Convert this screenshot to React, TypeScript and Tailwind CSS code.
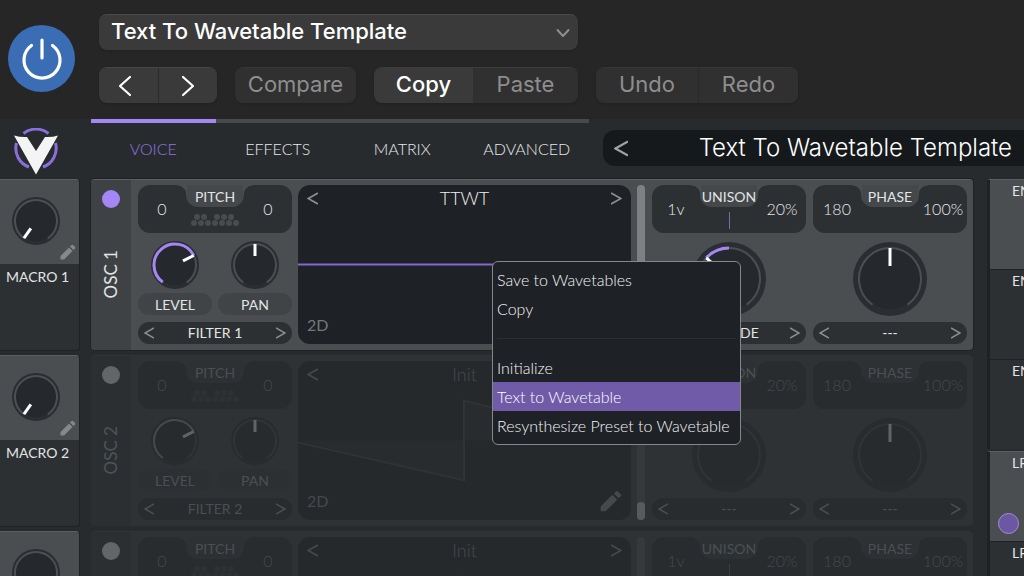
import clsx from "clsx";

const TABS = ["VOICE", "EFFECTS", "MATRIX", "ADVANCED"];

type Osc = {
  id: number;
  on: boolean;
  wave: string;
  filter: string;
  spectral: string;
};

const OSCILLATORS: Osc[] = [
  { id: 1, on: true, wave: "TTWT", filter: "FILTER 1", spectral: "VOCODE" },
  { id: 2, on: false, wave: "Init", filter: "FILTER 2", spectral: "---" },
  { id: 3, on: false, wave: "Init", filter: "FILTER 1", spectral: "---" },
];

const MODULATORS = [
  { name: "ENV 1", active: true },
  { name: "ENV 2", active: false },
  { name: "ENV 3", active: false },
  { name: "LFO 1", active: true },
  { name: "LFO 2", active: false },
];

// Degrees clockwise from twelve o'clock
function polar(c: number, r: number, deg: number) {
  const a = ((deg - 90) * Math.PI) / 180;
  return `${c + r * Math.cos(a)} ${c + r * Math.sin(a)}`;
}

function arc(c: number, r: number, from: number, to: number) {
  const large = to - from > 180 ? 1 : 0;
  return `M${polar(c, r, from)} A${r} ${r} 0 ${large} 1 ${polar(c, r, to)}`;
}

type KnobProps = {
  label: string;
  angle: number;
  fillFrom?: number;
  fillTo?: number;
  big?: boolean;
  on?: boolean;
};

function Knob({ label, angle, fillFrom, fillTo, big, on = true }: KnobProps) {
  const c = big ? 37 : 24;
  const r = big ? 31 : 21;
  return (
    <div
      className={clsx("relative shrink-0", big ? "mt-[2px] size-[74px]" : "size-12")}
    >
      <svg viewBox={`0 0 ${c * 2} ${c * 2}`} className="size-full" fill="none">
        <circle cx={c} cy={c} r={c} fill={on ? "#2a2d31" : "#282c2f"} />
        <circle cx={c} cy={c} r={r - 1} fill={on ? "#25282d" : "#272b2e"} />
        <path
          d={arc(c, r, -144, 144)}
          stroke={on ? "#4b4f53" : "#2f3437"}
          strokeWidth="2"
          strokeLinecap="round"
        />
        {fillFrom !== undefined && fillTo !== undefined && (
          <path
            d={arc(c, r, fillFrom, fillTo)}
            stroke={on ? "#a586f5" : "#46494c"}
            strokeWidth={on ? 3 : 2}
          />
        )}
        <path
          d={`M${polar(c, big ? 13 : 9, angle)} L${polar(c, r, angle)}`}
          stroke={on ? "#fff" : "#606467"}
          strokeWidth="3"
        />
      </svg>
      <input
        type="range"
        aria-label={label}
        className="absolute inset-0 size-full cursor-pointer opacity-0"
      />
    </div>
  );
}

function Pencil({ className }: { className?: string }) {
  return (
    <svg viewBox="0 0 16 16" className={className} fill="currentColor">
      <path d="M1 15.500q-.5 0-.5-.5v-3L9 3.500l3.500 3.500L4 15.500zM10 2.500L11.500 1q.8-.7 1.500 0l2 2q.7.8 0 1.500L13.500 6z" />
    </svg>
  );
}

function Angle({ right, className }: { right?: boolean; className?: string }) {
  return (
    <svg
      viewBox="0 0 10 12"
      className={clsx("shrink-0", className ?? "h-3 w-[10px]")}
      fill="none"
      stroke="currentColor"
    >
      <path d={right ? "M0 1l9 5-9 5" : "M10 1L1 6l9 5"} strokeWidth="1.5" />
    </svg>
  );
}

function HostArrow({ right }: { right?: boolean }) {
  return (
    <svg
      viewBox="0 0 14 22"
      className="h-[22px] w-[14px]"
      fill="none"
      stroke="#fff"
      strokeWidth="2.200"
      strokeLinecap="round"
      strokeLinejoin="round"
    >
      <path d={right ? "M2 2l10 9-10 9" : "M12 2L2 11l10 9"} />
    </svg>
  );
}

function Logo() {
  return (
    <svg viewBox="0 0 48 48" className="size-12" fill="none">
      <path
        d="M11.500 5.500A20 20 0 0 1 36.500 5.500M43.500 15A20 20 0 0 1 31 39M17 39A20 20 0 0 1 4.500 15"
        stroke="#8a6edb"
        strokeWidth="3"
      />
      <path
        d="M2 7.500q7 2 13 1.500L24 23l9-14q7 .5 13-1.500L24 46.500z"
        fill="#f4f4f4"
      />
    </svg>
  );
}

function HostHeader() {
  const raised = "bg-[#3a3a3a] text-white";
  const flat = "bg-[#303030] text-[#8e8e8e]";
  const group = "flex h-9 overflow-hidden rounded-lg border-t shadow-sm";
  return (
    <header className="flex gap-6 bg-[#262626] pt-[14px] pb-4 pl-2 font-[Inter,sans-serif] text-[22px] leading-8">
      <button
        aria-label="Power"
        className="mt-[11px] flex size-[67px] items-center justify-center rounded-full bg-[#3b6db4]"
      >
        <svg
          viewBox="0 0 42 42"
          className="size-[42px]"
          fill="none"
          stroke="#fff"
          strokeWidth="3.200"
          strokeLinecap="round"
        >
          <path d="M21 2v18M10.500 7.500a18 18 0 1 0 21 0" />
        </svg>
      </button>
      <div className="flex flex-col gap-[17px]">
        <div className="relative w-[479px]">
          <select
            aria-label="Preset"
            className="h-9 w-full appearance-none rounded-lg border-t border-[#4a4a4a] bg-[#3a3a3a] pb-1 pl-3 font-medium text-white shadow-sm"
          >
            <option>Text To Wavetable Template</option>
          </select>
          <svg
            viewBox="0 0 14 10"
            className="pointer-events-none absolute top-[14px] right-2 h-[10px] w-[14px]"
            fill="none"
            stroke="#8e8e8e"
            strokeWidth="2"
            strokeLinecap="round"
            strokeLinejoin="round"
          >
            <path d="M1.500 2L7 8l5.500-6" />
          </svg>
        </div>
        <div className="flex gap-[18px]">
          <div className={clsx(group, "border-[#454545]")}>
            <button
              aria-label="Previous"
              className={clsx(raised, "flex w-[59px] items-center justify-center pr-2")}
            >
              <HostArrow />
            </button>
            <button
              aria-label="Next"
              className={clsx(
                raised,
                "flex w-[59px] items-center justify-center border-l border-[#2c2c2c]"
              )}
            >
              <HostArrow right />
            </button>
          </div>
          <div className={clsx(group, "border-[#363636]")}>
            <button className={clsx(flat, "w-[121px] pb-1")}>Compare</button>
          </div>
          <div className={clsx(group, "border-[#3d3d3d]")}>
            <button className={clsx(raised, "w-[99px] pb-1 font-medium")}>
              Copy
            </button>
            <button className={clsx(flat, "w-[105px] pb-1")}>Paste</button>
          </div>
          <div className={clsx(group, "border-[#363636]")}>
            <button className={clsx(flat, "w-[102px] pb-1")}>Undo</button>
            <button
              className={clsx(flat, "w-[100px] border-l border-[#292929] pb-1")}
            >
              Redo
            </button>
          </div>
        </div>
      </div>
    </header>
  );
}

function TopBar() {
  return (
    <div className="flex h-[59px] shrink-0">
      <div className="flex w-[91px] pt-[9px] pl-3">
        <Logo />
      </div>
      <nav className="flex w-[498px]">
        {TABS.map((tab, i) => (
          <button
            key={tab}
            className={clsx(
              "flex-1 border-t-4 pb-1 text-base font-light",
              i === 0
                ? "border-[#a586f5] text-[#9274e0]"
                : "border-[#47494b] text-[#e6e8e9]"
            )}
          >
            {tab}
          </button>
        ))}
      </nav>
      <div className="mt-[11px] ml-[14px] flex h-9 flex-1 items-center rounded-l-xl bg-[#15191c] pl-[11px]">
        <button aria-label="Previous preset" className="text-[#a0a3a5]">
          <Angle className="h-[17px] w-[14px]" />
        </button>
        <span className="flex-1 pr-3 text-right font-[Inter,sans-serif] text-2xl font-light whitespace-nowrap text-white">
          Text To Wavetable Template
        </span>
      </div>
    </div>
  );
}

function Macro({ n }: { n: number }) {
  return (
    <section className="h-[172px] shrink-0 overflow-hidden rounded-r border border-t-0 border-l-0 border-[#1e2225] bg-[#2c3033]">
      <div className="relative h-[85px] border-t border-[#5b5f62] bg-[#4a4e51] pt-[17px] pl-3">
        <Knob label={`Macro ${n}`} angle={-145} />
        <Pencil className="absolute right-[3px] bottom-1 size-4 text-[#85888a]" />
      </div>
      <p className="pt-[3px] pl-[6px] text-sm text-[#e2e4e5]">MACRO {n}</p>
    </section>
  );
}

function ValueBox({
  title,
  left,
  right,
  on,
  children,
}: {
  title: string;
  left: string;
  right: string;
  on: boolean;
  children?: React.ReactNode;
}) {
  const value = clsx(
    "w-12 bg-transparent text-center text-base font-light",
    on ? "text-[#e6e8e9]" : "text-[#45494c]"
  );
  return (
    <div
      className={clsx(
        "flex h-12 rounded-xl",
        on ? "bg-[#2c3033]" : "bg-[#282c2f]"
      )}
    >
      <input aria-label={`${title} left`} defaultValue={left} className={value} />
      <div className="relative flex flex-1 flex-col items-center">
        <span
          className={clsx(
            "absolute top-0 -left-[9px] size-[10px]",
            on
              ? "bg-[radial-gradient(circle_at_0_100%,transparent_9px,#4a4e51_10px)]"
              : "bg-[radial-gradient(circle_at_0_100%,transparent_9px,#2e3235_10px)]"
          )}
        />
        <span
          className={clsx(
            "absolute top-0 -right-[9px] size-[10px]",
            on
              ? "bg-[radial-gradient(circle_at_100%_100%,transparent_9px,#4a4e51_10px)]"
              : "bg-[radial-gradient(circle_at_100%_100%,transparent_9px,#2e3235_10px)]"
          )}
        />
        <span
          className={clsx(
            "h-[22px] w-full rounded-b-xl text-center text-sm leading-6 whitespace-nowrap",
            on ? "bg-[#44484b] text-[#e2e4e5]" : "bg-[#2d3134] text-[#4b4f52]"
          )}
        >
          {title}
        </span>
        {children}
      </div>
      <input aria-label={`${title} right`} defaultValue={right} className={value} />
    </div>
  );
}

function Selector({ value, on }: { value: string; on: boolean }) {
  return (
    <div
      className={clsx(
        "flex h-[22px] items-center justify-between rounded-full px-[6px] text-sm",
        on ? "bg-[#2c3033] text-[#e2e4e5]" : "bg-[#282c2f] text-[#4b4f52]"
      )}
    >
      <button aria-label="Previous" className={on ? "text-[#8c9092]" : ""}>
        <Angle />
      </button>
      <span>{value}</span>
      <button aria-label="Next" className={on ? "text-[#8c9092]" : ""}>
        <Angle right />
      </button>
    </div>
  );
}

function KeyDots({ on }: { on: boolean }) {
  const top = [6, 13, 26, 33, 40];
  const bottom = [3, 10, 17, 24, 31, 38, 45];
  return (
    <svg
      viewBox="0 0 48 14"
      className="mt-[6px] h-[14px] w-12"
      fill={on ? "#484c4f" : "#2d3134"}
    >
      {top.map((x) => (
        <circle key={x} cx={x} cy="4" r="3" />
      ))}
      {bottom.map((x) => (
        <circle key={x} cx={x} cy="10" r="3" />
      ))}
    </svg>
  );
}

function Wavetable({ osc }: { osc: Osc }) {
  return (
    <div
      className={clsx(
        "relative flex flex-1 flex-col justify-between overflow-hidden rounded-xl px-[9px] pt-px pb-[7px]",
        osc.on ? "bg-[#1e2125] text-[#8c9092]" : "bg-[#25292c] text-[#45494c]"
      )}
    >
      <svg
        viewBox="0 0 333 160"
        preserveAspectRatio="none"
        className="absolute inset-0 size-full"
        fill="none"
      >
        {osc.on ? (
          <path d="M0 80H333" stroke="#8468cb" strokeWidth="2" />
        ) : (
          <>
            <path d="M0 80L166 120V40L333 80z" fill="#282c2f" />
            <path d="M0 82L166 120V40L333 80" stroke="#2f3336" strokeWidth="2" />
          </>
        )}
      </svg>
      <div className="relative flex h-6 items-center justify-between">
        <button aria-label="Previous wavetable">
          <Angle className="h-[13px] w-[11px]" />
        </button>
        <span
          className={clsx("text-lg font-light", osc.on && "text-[#f0f1f2]")}
        >
          {osc.wave}
        </span>
        <button aria-label="Next wavetable">
          <Angle right className="h-[13px] w-[11px]" />
        </button>
      </div>
      <div className="relative flex items-center justify-between">
        <span className={clsx("text-base", osc.on && "text-[#74787b]")}>2D</span>
        {!osc.on && (
          <button aria-label="Edit wavetable">
            <Pencil className="size-[22px]" />
          </button>
        )}
      </div>
    </div>
  );
}

function ContextMenu() {
  const item = "h-[29px] px-1 text-left";
  return (
    <div
      role="menu"
      className="absolute top-[81px] left-[401px] z-10 flex w-[249px] flex-col rounded-md border border-[#85888a] bg-[#1e2125] pt-[3px] text-base font-light text-[#f4f5f6]"
    >
      <button role="menuitem" className={item}>Save to Wavetables</button>
      <button role="menuitem" className={item}>Copy</button>
      <hr className="mx-1 mt-[15px] mb-[14px] border-[#2b2f32]" />
      <button role="menuitem" className={item}>Initialize</button>
      <button role="menuitem" className={clsx(item, "bg-[#6f5ba7] text-white")}>
        Text to Wavetable
      </button>
      <button role="menuitem" className={clsx(item, "mb-1")}>
        Resynthesize Preset to Wavetable
      </button>
    </div>
  );
}

function OscPanel({ osc }: { osc: Osc }) {
  const { on } = osc;
  const pill = clsx(
    "h-[22px] flex-1 rounded-full text-center text-sm leading-6",
    on ? "bg-[#404447] text-[#e2e4e5]" : "bg-[#2c3033] text-[#4b4f52]"
  );
  return (
    <section
      className={clsx(
        "relative flex h-[171px] shrink-0 rounded border-t",
        on
          ? "border-[#5b5f62] bg-[#4a4e51] shadow-[0_0_0_1px_#1e2225]"
          : "border-[#303437] bg-[#2e3235] shadow-[0_0_0_1px_#272b2e]"
      )}
    >
      <div
        className={clsx(
          "flex w-10 flex-col items-center rounded-l pt-[10px]",
          on ? "bg-[#3e4245]" : "bg-[#2b2f32]"
        )}
      >
        <input
          type="checkbox"
          aria-label={`Oscillator ${osc.id}`}
          defaultChecked={on}
          className="size-[18px] appearance-none rounded-full bg-[#636668] checked:bg-[#a586f5]"
        />
        <span
          className={clsx(
            "mt-[42px] rotate-180 text-[17px] leading-5 [writing-mode:vertical-rl]",
            on ? "text-[#e2e4e5]" : "text-[#4f5356]"
          )}
        >
          OSC {osc.id}
        </span>
      </div>
      <div className="flex flex-1 gap-[6px] pt-[5px] pr-[6px] pb-[6px] pl-[7px]">
        <div className="flex w-[154px] flex-col justify-between">
          <ValueBox title="PITCH" left="0" right="0" on={on}>
            <KeyDots on={on} />
          </ValueBox>
          <div>
            <div className="flex justify-between px-[13px]">
              <Knob
                label="Level"
                angle={63}
                fillFrom={-144}
                fillTo={63}
                on={on}
              />
              <Knob label="Pan" angle={0} on={on} />
            </div>
            <div className="mt-1 flex gap-[6px]">
              <span className={pill}>LEVEL</span>
              <span className={pill}>PAN</span>
            </div>
          </div>
          <Selector value={osc.filter} on={on} />
        </div>
        <Wavetable osc={osc} />
        <div
          className={clsx(
            "relative mr-px flex w-2 flex-col justify-end rounded-full",
            on ? "bg-[#7d8184]" : "bg-[#36393c]"
          )}
        >
          {!on && <span className="h-[18px] rounded-sm bg-[#585b5d]" />}
          <input
            type="range"
            aria-label="Wave frame"
            className="absolute inset-0 size-full opacity-0"
          />
        </div>
        <div className="mr-px flex w-[154px] flex-col items-center justify-between *:first:w-full *:last:w-full">
          <ValueBox title="UNISON" left="1v" right="20%" on={on}>
            <span
              className={clsx(
                "mt-[5px] h-[17px] w-px",
                on ? "bg-[#7a68b0]" : "bg-[#3a3e41]"
              )}
            />
          </ValueBox>
          <Knob
            label="Spectral morph"
            big
            angle={on ? -47 : 0}
            fillFrom={on ? -47 : undefined}
            fillTo={on ? 0 : undefined}
            on={on}
          />
          <Selector value={osc.spectral} on={on} />
        </div>
        <div className="flex w-[154px] flex-col items-center justify-between *:first:w-full *:last:w-full">
          <ValueBox title="PHASE" left="180" right="100%" on={on} />
          <Knob label="Distortion" big angle={0} on={on} />
          <Selector value="---" on={on} />
        </div>
      </div>
      {on && <ContextMenu />}
    </section>
  );
}

function Modulator({ name, active }: { name: string; active: boolean }) {
  const lfo = name === "LFO 1";
  return (
    <section
      className={clsx(
        "relative h-[90px] overflow-hidden border-t border-l-[3px] border-l-[#1e2225] pt-px pl-[22px] text-sm whitespace-nowrap text-[#e2e4e5]",
        active
          ? "border-t-[#5b5f62] bg-[#4a4e51]"
          : "border-t-[#1e2225] bg-[#2c3033]",
        lfo && "mt-[2px]"
      )}
    >
      <span>{name}</span>
      {lfo && (
        <button
          aria-label="Drag modulation"
          className="absolute bottom-[7px] left-2 size-[21px] rounded-full border border-[#a08fd0] bg-[#6c57a4]"
        />
      )}
    </section>
  );
}

export default function App() {
  return (
    <div className="flex h-screen flex-col overflow-hidden bg-[#272b2e] font-[Lato,sans-serif]">
      <HostHeader />
      <TopBar />
      <main className="flex flex-1 overflow-hidden pt-px">
        <aside className="flex w-20 flex-col gap-1">
          {[1, 2, 3].map((n) => (
            <Macro key={n} n={n} />
          ))}
        </aside>
        <div className="ml-[11px] flex flex-1 flex-col gap-[5px]">
          {OSCILLATORS.map((osc) => (
            <OscPanel key={osc.id} osc={osc} />
          ))}
        </div>
        <aside className="ml-[14px] w-[37px]">
          {MODULATORS.map((m) => (
            <Modulator key={m.name} {...m} />
          ))}
        </aside>
      </main>
    </div>
  );
}
